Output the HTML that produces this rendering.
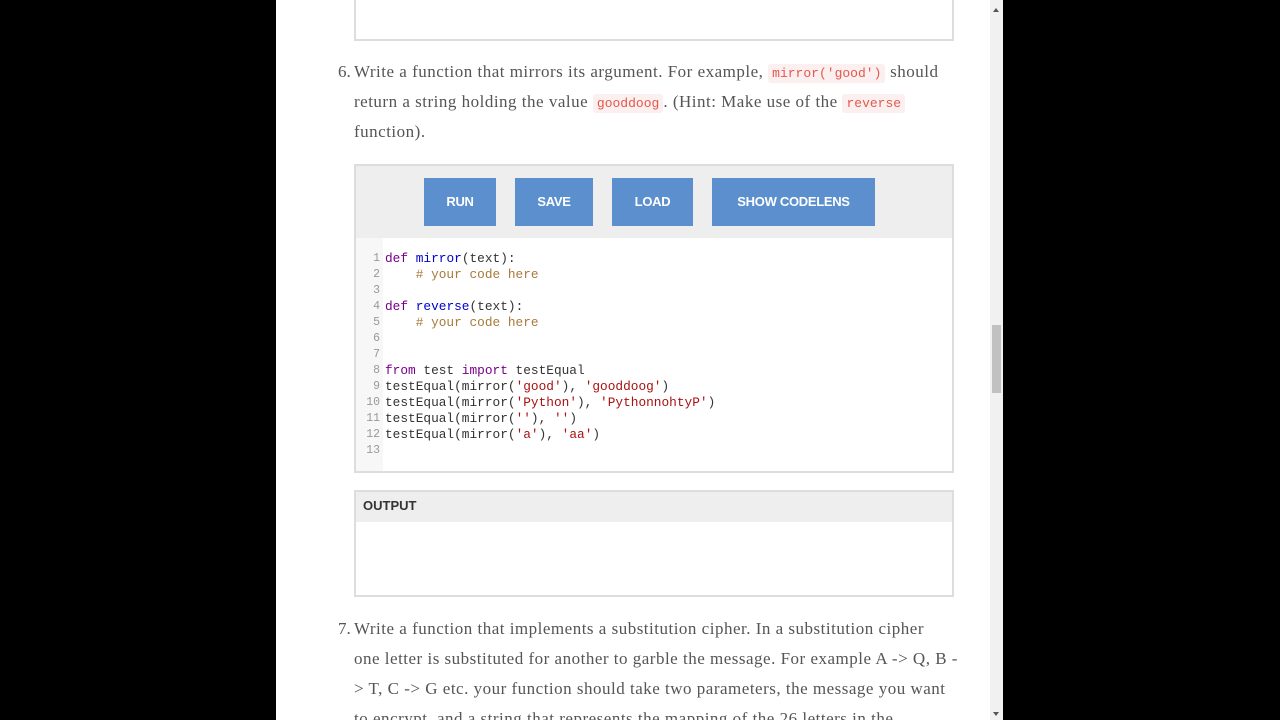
<!DOCTYPE html>
<html style="overflow:hidden"><head><meta charset="utf-8"><style>
html,body{overflow:hidden}
body{margin:0;width:1280px;height:720px;background:#000;position:relative;font-family:"Liberation Serif",serif}
.page{position:absolute;left:276px;top:0;width:727px;height:720px;background:#fff}
.sb{position:absolute;left:990px;top:0;width:13px;height:720px;background:#f1f1f1}
.thumb{position:absolute;left:992px;top:325px;width:9px;height:68px;background:#c1c1c1}
.p{position:absolute;left:354px;color:#555;font-size:17px;line-height:30px;white-space:nowrap;letter-spacing:0.5px}
.num{position:absolute;left:338px;color:#555;font-size:17px;line-height:30px}
code{font-family:"Liberation Mono",monospace;font-size:13px;color:#e4584c;background:#fbf0ef;padding:2px 4px;border-radius:3px;letter-spacing:0}
.box{position:absolute;border:2px solid #ddd;background:#fff;box-sizing:border-box}
.btn{position:absolute;top:178px;height:48px;background:#5b8fcd;color:#fff;font:bold 13px "Liberation Sans",sans-serif;text-align:center;line-height:48px;letter-spacing:-0.3px}
.code{position:absolute;left:357px;top:251px;font-family:"Liberation Mono",monospace;font-size:12.8px;color:#333}
.code div{height:16px;line-height:16px;white-space:pre}
.ln{color:#999;display:inline-block;width:23px;text-align:right;margin-right:5px;font-size:11.5px;vertical-align:top;line-height:16px}
.k{color:#708}.f{color:#00c}.c{color:#a87a3c}.s{color:#a11}
</style></head><body>
<div class="page"></div>
<div class="box" style="left:354px;top:-2px;width:600px;height:43px"></div>
<div class="num" style="top:57px">6.</div>
<div class="p" style="top:57px">Write a function that mirrors its argument. For example, <code>mirror('good')</code> should</div>
<div class="p" style="top:87px">return a string holding the value <code>gooddoog</code>. (Hint: Make use of the <code>reverse</code></div>
<div class="p" style="top:117px">function).</div>
<div class="box" style="left:354px;top:164px;width:600px;height:309px;background:#fff"></div>
<div style="position:absolute;left:356px;top:166px;width:596px;height:72px;background:#eee"></div>
<div style="position:absolute;left:356px;top:238px;width:27px;height:233px;background:#f7f7f7"></div>
<div class="btn" style="left:424px;width:72px">RUN</div>
<div class="btn" style="left:515px;width:78px">SAVE</div>
<div class="btn" style="left:612px;width:81px">LOAD</div>
<div class="btn" style="left:712px;width:163px">SHOW CODELENS</div>
<div class="code">
<div><span class="ln">1</span><span class="k">def</span> <span class="f">mirror</span>(text):</div>
<div><span class="ln">2</span>    <span class="c"># your code here</span></div>
<div><span class="ln">3</span></div>
<div><span class="ln">4</span><span class="k">def</span> <span class="f">reverse</span>(text):</div>
<div><span class="ln">5</span>    <span class="c"># your code here</span></div>
<div><span class="ln">6</span></div>
<div><span class="ln">7</span></div>
<div><span class="ln">8</span><span class="k">from</span> test <span class="k">import</span> testEqual</div>
<div><span class="ln">9</span>testEqual(mirror(<span class="s">'good'</span>), <span class="s">'gooddoog'</span>)</div>
<div><span class="ln">10</span>testEqual(mirror(<span class="s">'Python'</span>), <span class="s">'PythonnohtyP'</span>)</div>
<div><span class="ln">11</span>testEqual(mirror(<span class="s">''</span>), <span class="s">''</span>)</div>
<div><span class="ln">12</span>testEqual(mirror(<span class="s">'a'</span>), <span class="s">'aa'</span>)</div>
<div><span class="ln">13</span></div>
</div>
<div class="box" style="left:354px;top:490px;width:600px;height:107px"></div>
<div style="position:absolute;left:356px;top:492px;width:596px;height:30px;background:#eee;font:bold 13px 'Liberation Sans',sans-serif;color:#333;line-height:28px;padding-left:7px;box-sizing:border-box">OUTPUT</div>
<div class="num" style="top:614px">7.</div>
<div class="p" style="top:614px">Write a function that implements a substitution cipher. In a substitution cipher</div>
<div class="p" style="top:644px">one letter is substituted for another to garble the message. For example A -&gt; Q, B -</div>
<div class="p" style="top:674px">&gt; T, C -&gt; G etc. your function should take two parameters, the message you want</div>
<div class="p" style="top:704px;height:16px;overflow:hidden">to encrypt, and a string that represents the mapping of the 26 letters in the</div>
<div class="sb"></div><div class="thumb"></div>
<div style="position:absolute;left:993px;top:8px;width:0;height:0;border-left:3px solid transparent;border-right:3px solid transparent;border-bottom:4px solid #555"></div>
<div style="position:absolute;left:993px;top:712px;width:0;height:0;border-left:3px solid transparent;border-right:3px solid transparent;border-top:4px solid #555"></div>
</body></html>
